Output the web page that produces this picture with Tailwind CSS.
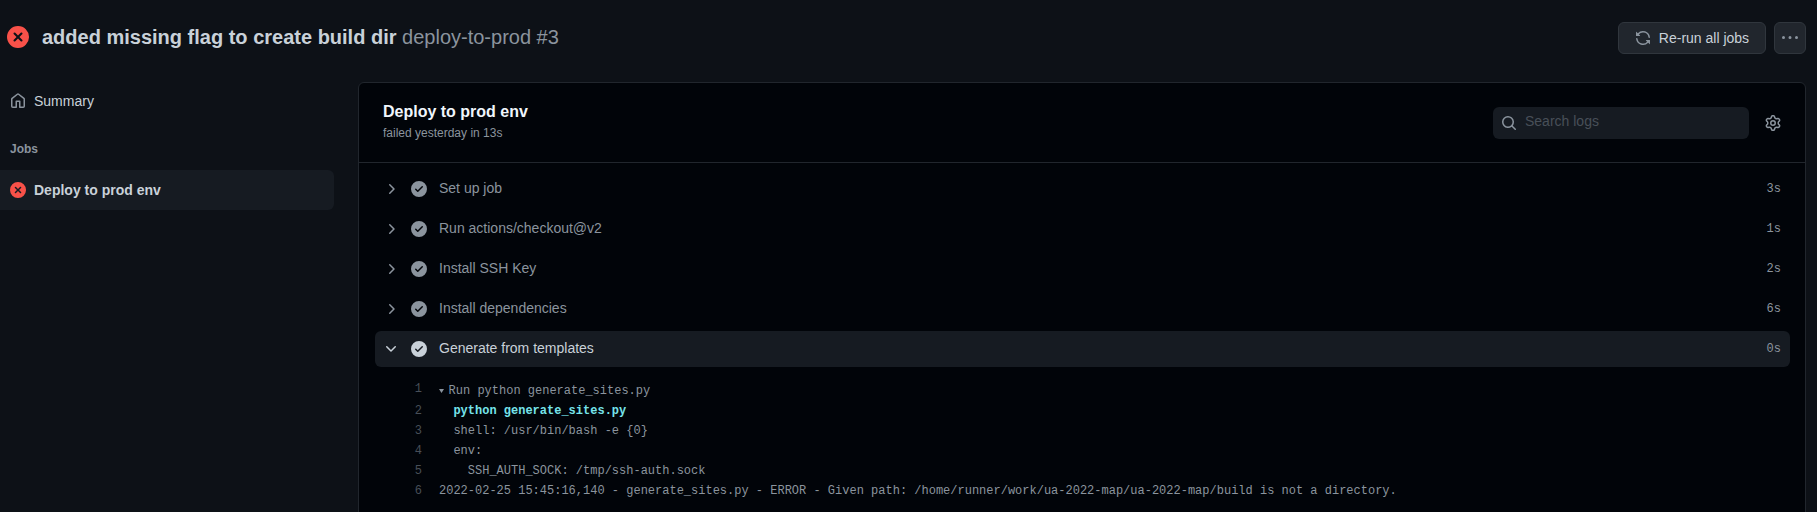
<!DOCTYPE html>
<html lang="en">
<head>
  <meta charset="UTF-8" />
  <title>added missing flag to create build dir · deploy-to-prod #3</title>
  <script src="https://cdn.jsdelivr.net/npm/@tailwindcss/browser@4"></script>
</head>
<body class="bg-[#0d1117] font-['Liberation_Sans',Arial,sans-serif] text-[14px] text-[#c9d1d9]">
  <div class="h-[512px] overflow-hidden">
    <!-- run header -->
    <header class="flex h-[82px] items-start justify-between pl-[7px] pr-[11px]">
      <div class="flex items-center gap-[13px] pt-[22px]">
        <svg class="h-[22px] w-[22px] fill-[#f85149]" viewBox="0 0 16 16"><path d="M2.343 13.657A8 8 0 1 1 13.658 2.343 8 8 0 0 1 2.343 13.657ZM6.03 4.97a.751.751 0 0 0-1.042.018.751.751 0 0 0-.018 1.042L6.94 8 4.97 9.97a.749.749 0 0 0 .326 1.275.749.749 0 0 0 .734-.215L8 9.06l1.97 1.97a.749.749 0 0 0 1.275-.326.749.749 0 0 0-.215-.734L9.06 8l1.97-1.97a.749.749 0 0 0-.326-1.275.749.749 0 0 0-.734.215L8 6.94Z"/></svg>
        <h1 class="text-[20px] leading-[30px] text-[#c9d1d9]"><span class="font-semibold">added missing flag to create build dir</span> <span class="text-[#8b949e]">deploy-to-prod #3</span></h1>
      </div>
      <div class="flex gap-2 pt-[22px]">
        <button class="flex h-[32px] w-[148px] items-center justify-center gap-2 rounded-md border border-[#30363d] bg-[#21262d] text-[#c9d1d9]">
          <svg class="h-4 w-4 fill-[#8b949e]" viewBox="0 0 16 16"><path d="M1.705 8.005a.75.75 0 0 1 .834.656 5.5 5.5 0 0 0 9.592 2.97l-1.204-1.204a.25.25 0 0 1 .177-.427h3.646a.25.25 0 0 1 .25.25v3.646a.25.25 0 0 1-.427.177l-1.38-1.38A7.002 7.002 0 0 1 1.05 8.84a.75.75 0 0 1 .656-.834ZM8 2.5a5.487 5.487 0 0 0-4.131 1.869l1.204 1.204A.25.25 0 0 1 4.896 6H1.25A.25.25 0 0 1 1 5.75V2.104a.25.25 0 0 1 .427-.177l1.38 1.38A7.002 7.002 0 0 1 14.95 7.16a.75.75 0 0 1-1.49.178A5.5 5.5 0 0 0 8 2.5Z"/></svg>
          Re-run all jobs
        </button>
        <button class="flex h-[32px] w-[32px] items-center justify-center rounded-md border border-[#30363d] bg-[#21262d]">
          <svg class="h-4 w-4 fill-[#8b949e]" viewBox="0 0 16 16"><path d="M8 9a1.5 1.5 0 1 0 0-3 1.5 1.5 0 0 0 0 3ZM1.5 9a1.5 1.5 0 1 0 0-3 1.5 1.5 0 0 0 0 3Zm13 0a1.5 1.5 0 1 0 0-3 1.5 1.5 0 0 0 0 3Z"/></svg>
        </button>
      </div>
    </header>

    <div class="flex items-start pr-[11px]">
      <!-- sidebar -->
      <aside class="w-[334px] shrink-0">
        <a class="flex h-[38px] items-center gap-2 pl-[10px]">
          <svg class="h-4 w-4 fill-[#8b949e]" viewBox="0 0 16 16"><path d="M6.906.664a1.749 1.749 0 0 1 2.187 0l5.25 4.2c.415.332.657.835.657 1.367v7.019A1.75 1.75 0 0 1 13.25 15h-3.5a.75.75 0 0 1-.75-.75V9H7v5.25a.75.75 0 0 1-.75.75h-3.5A1.75 1.75 0 0 1 1 13.25V6.23c0-.531.242-1.034.657-1.366l5.25-4.2Zm1.25 1.171a.25.25 0 0 0-.312 0l-5.25 4.2a.25.25 0 0 0-.094.196v7.019c0 .138.112.25.25.25H5.5V8.25a.75.75 0 0 1 .75-.75h3.5a.75.75 0 0 1 .75.75v5.25h2.75a.25.25 0 0 0 .25-.25V6.23a.25.25 0 0 0-.094-.195Z"/></svg>
          Summary
        </a>
        <div class="pl-[10px] pt-[20px] text-[12px] font-semibold leading-[18px] text-[#8b949e]">Jobs</div>
        <a class="mt-[12px] flex h-[40px] items-center gap-2 rounded-r-md bg-[#161b22] pl-[10px] font-semibold">
          <svg class="h-4 w-4 fill-[#f85149]" viewBox="0 0 16 16"><path d="M2.343 13.657A8 8 0 1 1 13.658 2.343 8 8 0 0 1 2.343 13.657ZM6.03 4.97a.751.751 0 0 0-1.042.018.751.751 0 0 0-.018 1.042L6.94 8 4.97 9.97a.749.749 0 0 0 .326 1.275.749.749 0 0 0 .734-.215L8 9.06l1.97 1.97a.749.749 0 0 0 1.275-.326.749.749 0 0 0-.215-.734L9.06 8l1.97-1.97a.749.749 0 0 0-.326-1.275.749.749 0 0 0-.734.215L8 6.94Z"/></svg>
          Deploy to prod env
        </a>
      </aside>

      <!-- job panel -->
      <main class="ml-[24px] min-h-[600px] flex-1 rounded-t-md border border-[#21262d] bg-[#010409]">
        <div class="flex h-[80px] items-center justify-between border-b border-[#21262d] pl-[24px] pr-[24px]">
          <div class="pb-[3px]">
            <div class="text-[16px] font-semibold leading-[24px] text-[#f0f6fc]">Deploy to prod env</div>
            <div class="text-[12px] leading-[18px] text-[#8b949e]">failed yesterday in 13s</div>
          </div>
          <div class="flex items-center gap-4">
            <div class="flex h-[32px] w-[256px] items-center gap-[8px] rounded-md bg-[#161b22] pl-[8px] text-[#484f58]">
              <svg class="h-4 w-4 fill-[#8b949e]" viewBox="0 0 16 16"><path d="M10.68 11.74a6 6 0 0 1-7.922-8.982 6 6 0 0 1 8.982 7.922l3.04 3.04a.749.749 0 0 1-.326 1.275.749.749 0 0 1-.734-.215ZM11.5 7a4.499 4.499 0 1 0-8.997 0A4.499 4.499 0 0 0 11.5 7Z"/></svg>
              <span class="-mt-[3px]">Search logs</span>
            </div>
            <svg class="h-4 w-4 fill-[#8b949e]" viewBox="0 0 16 16"><path d="M8 0a8.2 8.2 0 0 1 .701.031C9.444.095 9.99.645 10.16 1.29l.288 1.107c.018.066.079.158.212.224.231.114.454.243.668.386.123.082.233.09.299.071l1.103-.303c.644-.176 1.392.021 1.82.63.27.385.506.792.704 1.218.315.675.111 1.422-.364 1.891l-.814.806c-.049.048-.098.147-.088.294.016.257.016.515 0 .772-.01.147.038.246.088.294l.814.806c.475.469.679 1.216.364 1.891a7.977 7.977 0 0 1-.704 1.217c-.428.61-1.176.807-1.82.63l-1.102-.302c-.067-.019-.177-.011-.3.071a5.909 5.909 0 0 1-.668.386c-.133.066-.194.158-.211.224l-.29 1.106c-.168.646-.715 1.196-1.458 1.26a8.006 8.006 0 0 1-1.402 0c-.743-.064-1.289-.614-1.458-1.26l-.289-1.106c-.018-.066-.079-.158-.212-.224a5.738 5.738 0 0 1-.668-.386c-.123-.082-.233-.09-.299-.071l-1.103.303c-.644.176-1.392-.021-1.82-.63a8.12 8.12 0 0 1-.704-1.218c-.315-.675-.111-1.422.363-1.891l.815-.806c.05-.048.098-.147.088-.294a6.214 6.214 0 0 1 0-.772c.01-.147-.038-.246-.088-.294l-.815-.806C.635 6.045.431 5.298.746 4.623a7.92 7.92 0 0 1 .704-1.217c.428-.61 1.176-.807 1.82-.63l1.102.302c.067.019.177.011.3-.071.214-.143.437-.272.668-.386.133-.066.194-.158.211-.224l.29-1.106C6.009.645 6.556.095 7.299.03 7.53.01 7.764 0 8 0Zm-.571 1.525c-.036.003-.108.036-.137.146l-.289 1.105c-.147.561-.549.967-.998 1.189-.173.086-.34.183-.5.29-.417.278-.97.423-1.529.27l-1.103-.303c-.109-.03-.175.016-.195.045-.22.312-.412.644-.573.99-.014.031-.021.11.059.19l.815.806c.411.406.562.957.53 1.456a4.709 4.709 0 0 0 0 .582c.032.499-.119 1.05-.53 1.456l-.815.806c-.081.08-.073.159-.059.19.162.346.353.677.573.989.02.03.085.076.195.046l1.102-.303c.56-.153 1.113-.008 1.53.27.161.107.328.204.501.29.447.222.85.629.997 1.189l.289 1.105c.029.109.101.143.137.146a6.6 6.6 0 0 0 1.142 0c.036-.003.108-.036.137-.146l.289-1.105c.147-.561.549-.967.998-1.189.173-.086.34-.183.5-.29.417-.278.97-.423 1.529-.27l1.103.303c.109.029.175-.016.195-.045.22-.313.411-.644.573-.99.014-.031.021-.11-.059-.19l-.815-.806c-.411-.406-.562-.957-.53-1.456a4.709 4.709 0 0 0 0-.582c-.032-.499.119-1.05.53-1.456l.815-.806c.081-.08.073-.159.059-.19a6.464 6.464 0 0 0-.573-.989c-.02-.03-.085-.076-.195-.046l-1.102.303c-.56.153-1.113.008-1.53-.27a4.44 4.44 0 0 0-.501-.29c-.447-.222-.85-.629-.997-1.189l-.289-1.105c-.029-.11-.101-.143-.137-.146a6.6 6.6 0 0 0-1.142 0ZM11 8a3 3 0 1 1-6 0 3 3 0 0 1 6 0ZM9.5 8a1.5 1.5 0 1 0-3.001.001A1.5 1.5 0 0 0 9.5 8Z"/></svg>
          </div>
        </div>

        <!-- steps -->
        <div class="pl-[16px] pr-[15px] pt-[8px] text-[#8b949e]">
          <div class="mb-[4px] flex h-[36px] items-center rounded-md pl-[8px] pr-[9px]">
            <svg class="mr-[12px] h-4 w-4 fill-[#8b949e]" viewBox="0 0 16 16"><path d="M6.22 3.22a.75.75 0 0 1 1.06 0l4.25 4.25a.75.75 0 0 1 0 1.06l-4.25 4.25a.751.751 0 0 1-1.042-.018.751.751 0 0 1-.018-1.042L9.94 8 6.22 4.28a.75.75 0 0 1 0-1.06Z"/></svg>
            <svg class="mr-[12px] h-4 w-4 fill-[#8b949e]" viewBox="0 0 16 16"><path d="M8 16A8 8 0 1 1 8 0a8 8 0 0 1 0 16Zm3.78-9.72a.751.751 0 0 0-.018-1.042.751.751 0 0 0-1.042-.018L6.75 9.19 5.28 7.72a.751.751 0 0 0-1.042.018.751.751 0 0 0-.018 1.042l2 2a.75.75 0 0 0 1.06 0Z"/></svg>
            <span class="-mt-[1px] flex-1">Set up job</span>
            <span class="font-['Liberation_Mono',monospace] text-[12px]">3s</span>
          </div>
          <div class="mb-[4px] flex h-[36px] items-center rounded-md pl-[8px] pr-[9px]">
            <svg class="mr-[12px] h-4 w-4 fill-[#8b949e]" viewBox="0 0 16 16"><path d="M6.22 3.22a.75.75 0 0 1 1.06 0l4.25 4.25a.75.75 0 0 1 0 1.06l-4.25 4.25a.751.751 0 0 1-1.042-.018.751.751 0 0 1-.018-1.042L9.94 8 6.22 4.28a.75.75 0 0 1 0-1.06Z"/></svg>
            <svg class="mr-[12px] h-4 w-4 fill-[#8b949e]" viewBox="0 0 16 16"><path d="M8 16A8 8 0 1 1 8 0a8 8 0 0 1 0 16Zm3.78-9.72a.751.751 0 0 0-.018-1.042.751.751 0 0 0-1.042-.018L6.75 9.19 5.28 7.72a.751.751 0 0 0-1.042.018.751.751 0 0 0-.018 1.042l2 2a.75.75 0 0 0 1.06 0Z"/></svg>
            <span class="-mt-[1px] flex-1">Run actions/checkout@v2</span>
            <span class="font-['Liberation_Mono',monospace] text-[12px]">1s</span>
          </div>
          <div class="mb-[4px] flex h-[36px] items-center rounded-md pl-[8px] pr-[9px]">
            <svg class="mr-[12px] h-4 w-4 fill-[#8b949e]" viewBox="0 0 16 16"><path d="M6.22 3.22a.75.75 0 0 1 1.06 0l4.25 4.25a.75.75 0 0 1 0 1.06l-4.25 4.25a.751.751 0 0 1-1.042-.018.751.751 0 0 1-.018-1.042L9.94 8 6.22 4.28a.75.75 0 0 1 0-1.06Z"/></svg>
            <svg class="mr-[12px] h-4 w-4 fill-[#8b949e]" viewBox="0 0 16 16"><path d="M8 16A8 8 0 1 1 8 0a8 8 0 0 1 0 16Zm3.78-9.72a.751.751 0 0 0-.018-1.042.751.751 0 0 0-1.042-.018L6.75 9.19 5.28 7.72a.751.751 0 0 0-1.042.018.751.751 0 0 0-.018 1.042l2 2a.75.75 0 0 0 1.06 0Z"/></svg>
            <span class="-mt-[1px] flex-1">Install SSH Key</span>
            <span class="font-['Liberation_Mono',monospace] text-[12px]">2s</span>
          </div>
          <div class="mb-[4px] flex h-[36px] items-center rounded-md pl-[8px] pr-[9px]">
            <svg class="mr-[12px] h-4 w-4 fill-[#8b949e]" viewBox="0 0 16 16"><path d="M6.22 3.22a.75.75 0 0 1 1.06 0l4.25 4.25a.75.75 0 0 1 0 1.06l-4.25 4.25a.751.751 0 0 1-1.042-.018.751.751 0 0 1-.018-1.042L9.94 8 6.22 4.28a.75.75 0 0 1 0-1.06Z"/></svg>
            <svg class="mr-[12px] h-4 w-4 fill-[#8b949e]" viewBox="0 0 16 16"><path d="M8 16A8 8 0 1 1 8 0a8 8 0 0 1 0 16Zm3.78-9.72a.751.751 0 0 0-.018-1.042.751.751 0 0 0-1.042-.018L6.75 9.19 5.28 7.72a.751.751 0 0 0-1.042.018.751.751 0 0 0-.018 1.042l2 2a.75.75 0 0 0 1.06 0Z"/></svg>
            <span class="-mt-[1px] flex-1">Install dependencies</span>
            <span class="font-['Liberation_Mono',monospace] text-[12px]">6s</span>
          </div>
          <div class="flex h-[36px] items-center rounded-md bg-[#161b22] pl-[8px] pr-[9px] text-[#c9d1d9]">
            <svg class="mr-[12px] h-4 w-4 fill-[#c9d1d9]" viewBox="0 0 16 16"><path d="M12.78 5.22a.749.749 0 0 1 0 1.06l-4.25 4.25a.749.749 0 0 1-1.06 0L3.22 6.28a.749.749 0 1 1 1.06-1.06L8 8.939l3.72-3.719a.749.749 0 0 1 1.06 0Z"/></svg>
            <svg class="mr-[12px] h-4 w-4 fill-[#c9d1d9]" viewBox="0 0 16 16"><path d="M8 16A8 8 0 1 1 8 0a8 8 0 0 1 0 16Zm3.78-9.72a.751.751 0 0 0-.018-1.042.751.751 0 0 0-1.042-.018L6.75 9.19 5.28 7.72a.751.751 0 0 0-1.042.018.751.751 0 0 0-.018 1.042l2 2a.75.75 0 0 0 1.06 0Z"/></svg>
            <span class="-mt-[1px] flex-1">Generate from templates</span>
            <span class="font-['Liberation_Mono',monospace] text-[12px] text-[#8b949e]">0s</span>
          </div>
        </div>

        <!-- log -->
        <div class="pl-[16px] pt-[14px] font-['Liberation_Mono',monospace] text-[12px] leading-[20px] text-[#8b949e]">
          <div class="flex"><span class="-mt-[2px] w-[48px] pr-[1px] text-right text-[#484f58]">1</span><span class="flex items-center whitespace-pre pl-[16px]"><svg class="mr-[4.6px] h-[4px] w-[5px] fill-[#8b949e]" viewBox="0 0 5 4"><path d="M0 0h5L2.5 4Z"/></svg>Run python generate_sites.py</span></div>
          <div class="flex"><span class="w-[48px] pr-[1px] text-right text-[#484f58]">2</span><span class="whitespace-pre pl-[16px] font-bold text-[#76e3ea]">  python generate_sites.py</span></div>
          <div class="flex"><span class="w-[48px] pr-[1px] text-right text-[#484f58]">3</span><span class="whitespace-pre pl-[16px]">  shell: /usr/bin/bash -e {0}</span></div>
          <div class="flex"><span class="w-[48px] pr-[1px] text-right text-[#484f58]">4</span><span class="whitespace-pre pl-[16px]">  env:</span></div>
          <div class="flex"><span class="w-[48px] pr-[1px] text-right text-[#484f58]">5</span><span class="whitespace-pre pl-[16px]">    SSH_AUTH_SOCK: /tmp/ssh-auth.sock</span></div>
          <div class="flex"><span class="w-[48px] pr-[1px] text-right text-[#484f58]">6</span><span class="whitespace-pre pl-[16px]">2022-02-25 15:45:16,140 - generate_sites.py - ERROR - Given path: /home/runner/work/ua-2022-map/ua-2022-map/build is not a directory.</span></div>
        </div>
      </main>
    </div>
  </div>
</body>
</html>
